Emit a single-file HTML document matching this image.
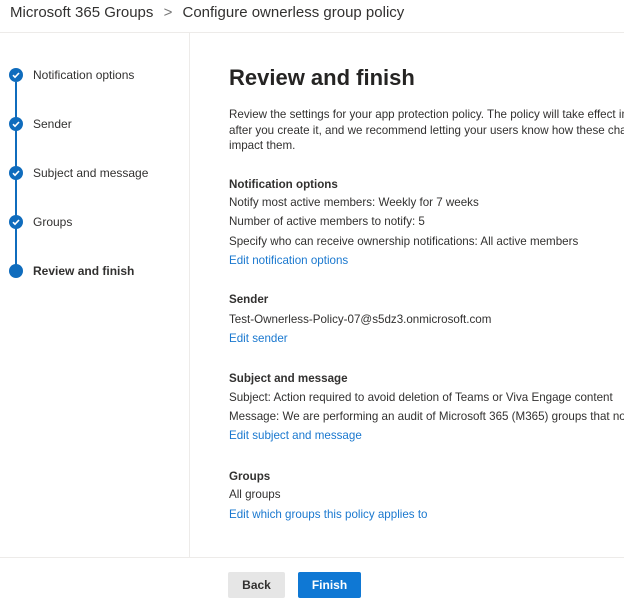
<!DOCTYPE html>
<html><head><style>
html,body{margin:0;width:624px;height:602px;overflow:hidden}
body{background:#fff;font-family:"Liberation Sans",sans-serif;color:#323130}
#w{position:relative;width:624px;height:602px;overflow:hidden}
.a{position:absolute;white-space:nowrap;font-size:11.6px;line-height:16px}
.b{font-weight:bold}
.l{color:#1a78cf}
.c{position:absolute;left:9px;width:14px;height:14px;border-radius:50%;background:#0f6cbd}
.c svg{position:absolute;left:0;top:0}
.v{position:absolute;left:15px;width:2px;background:#0f6cbd}
.s{position:absolute;left:33px;font-size:12px;line-height:16px;color:#323130}
</style></head><body><div id="w">
<div style="position:absolute;left:10px;top:3px;font-size:15px;line-height:20px;color:#323130;white-space:nowrap">Microsoft 365 Groups <span style="color:#777;margin:0 6px">&gt;</span> Configure ownerless group policy</div>
<div style="position:absolute;left:0;top:32px;width:624px;height:1px;background:#edebe9"></div>
<div style="position:absolute;left:189px;top:33px;width:1px;height:524px;background:#edebe9"></div>
<div style="position:absolute;left:0;top:557px;width:624px;height:1px;background:#edebe9"></div>

<div class="v" style="top:82px;height:186px"></div>
<div class="c" style="top:68px"><svg width="14" height="14"><path d="M4 7.2l2 2 4-4.2" stroke="#fff" stroke-width="1.6" fill="none"/></svg></div>
<div class="c" style="top:117px"><svg width="14" height="14"><path d="M4 7.2l2 2 4-4.2" stroke="#fff" stroke-width="1.6" fill="none"/></svg></div>
<div class="c" style="top:166px"><svg width="14" height="14"><path d="M4 7.2l2 2 4-4.2" stroke="#fff" stroke-width="1.6" fill="none"/></svg></div>
<div class="c" style="top:215px"><svg width="14" height="14"><path d="M4 7.2l2 2 4-4.2" stroke="#fff" stroke-width="1.6" fill="none"/></svg></div>
<div class="c" style="top:264px"></div>
<div class="s" style="top:67px">Notification options</div>
<div class="s" style="top:116px">Sender</div>
<div class="s" style="top:165px">Subject and message</div>
<div class="s" style="top:214px">Groups</div>
<div class="s b" style="top:263px">Review and finish</div>

<div class="a b" style="left:229px;top:64px;font-size:22px;line-height:28px;color:#252423">Review and finish</div>
<div class="a" style="left:229px;top:107px">Review the settings for your app protection policy. The policy will take effect immediately</div>
<div class="a" style="left:229px;top:123px">after you create it, and we recommend letting your users know how these changes will</div>
<div class="a" style="left:229px;top:138px">impact them.</div>

<div class="a b" style="left:229px;top:177px">Notification options</div>
<div class="a" style="left:229px;top:195px">Notify most active members: Weekly for 7 weeks</div>
<div class="a" style="left:229px;top:214px">Number of active members to notify: 5</div>
<div class="a" style="left:229px;top:234px">Specify who can receive ownership notifications: All active members</div>
<div class="a l" style="left:229px;top:253px">Edit notification options</div>

<div class="a b" style="left:229px;top:292px">Sender</div>
<div class="a" style="left:229px;top:312px">Test-Ownerless-Policy-07@s5dz3.onmicrosoft.com</div>
<div class="a l" style="left:229px;top:331px">Edit sender</div>

<div class="a b" style="left:229px;top:371px">Subject and message</div>
<div class="a" style="left:229px;top:390px">Subject: Action required to avoid deletion of Teams or Viva Engage content</div>
<div class="a" style="left:229px;top:409px">Message: We are performing an audit of Microsoft 365 (M365) groups that no</div>
<div class="a l" style="left:229px;top:428px">Edit subject and message</div>

<div class="a b" style="left:229px;top:469px">Groups</div>
<div class="a" style="left:229px;top:487px">All groups</div>
<div class="a l" style="left:229px;top:507px">Edit which groups this policy applies to</div>

<div style="position:absolute;left:228px;top:572px;width:57px;height:26px;background:#e6e6e6;border-radius:2px;font-size:12px;line-height:26px;text-align:center;font-weight:bold;color:#323130">Back</div>
<div style="position:absolute;left:298px;top:572px;width:63px;height:26px;background:#0f78d4;border-radius:2px;font-size:12px;line-height:26px;text-align:center;font-weight:bold;color:#fff">Finish</div>
</div></body></html>
